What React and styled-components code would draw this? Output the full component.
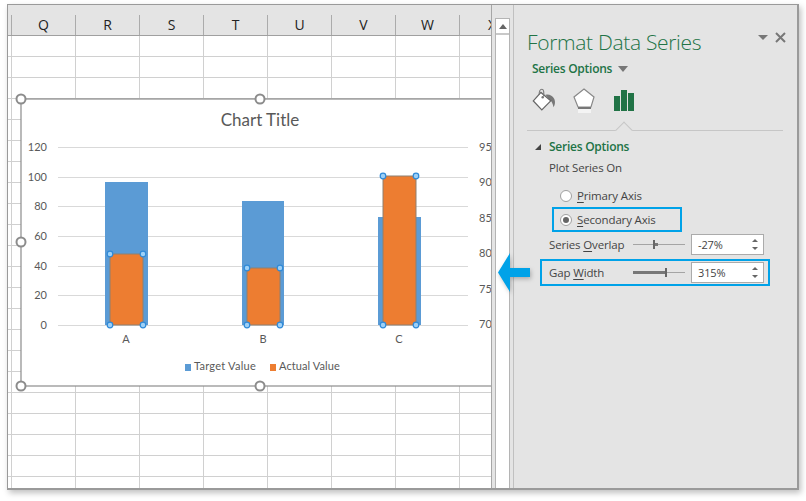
import React from 'react';
import styled, { createGlobalStyle } from 'styled-components';

const GlobalStyle = createGlobalStyle`
  html, body { margin: 0; padding: 0; background: #fff; }
  #root { width: 806px; height: 501px; overflow: hidden; }
`;

const Page = styled.div`
  width: 806px;
  height: 501px;
  padding: 4px 0 0 7px;
  box-sizing: border-box;
`;

const Window = styled.div`
  width: 792px;
  height: 486px;
  display: flex;
  box-sizing: border-box;
  background: #e4e4e4;
  border: 1px solid #9a9a9a;
  border-width: 1px 2px 2px 1px;
  box-shadow: 2px 3px 6px rgba(0, 0, 0, 0.25);
  position: relative;
`;

const Sheet = styled.div`
  width: 483px;
  flex: none;
  position: relative;
  overflow: hidden;
  box-sizing: content-box;
  border-right: 1px solid #a6a6a6;
`;

const HeaderRow = styled.div`
  height: 31px;
  display: flex;
  align-items: flex-end;
  box-sizing: border-box;
  border-bottom: 1px solid #a0a0a0;
`;

const HeaderCell = styled.div`
  width: ${({ $w }) => $w}px;
  flex: none;
  height: 20px;
  box-sizing: border-box;
  border-right: 1px solid #ababab;
  font: 14px 'Open Sans', sans-serif;
  color: #222;
  text-align: center;
  line-height: 20px;
  &:last-child { border-right: 0; }
`;

const Cells = styled.div`
  background: #fff;
  height: 453px;
  overflow: hidden;
`;

const Row = styled.div`
  display: flex;
  height: 21px;
  box-sizing: border-box;
  border-bottom: 1px solid #d0d0d0;
`;

const Cell = styled.div`
  width: ${({ $w }) => $w}px;
  flex: none;
  box-sizing: border-box;
  border-right: 1px solid #d0d0d0;
  &:last-child { border-right: 0; }
`;

const ChartLayer = styled.svg`
  position: absolute;
  left: 0;
  top: 85px;
  display: block;
`;

const Track = styled.div`
  width: 13px;
  flex: none;
  margin: 13px 0 0 3px;
  background: #fff;
  border: 1px solid #b4b4b4;
  border-width: 1px 1px 0 1px;
  box-sizing: content-box;
`;

const TrackButton = styled.div`
  height: 14px;
  border-bottom: 2px solid #c8c8c8;
  display: flex;
  align-items: center;
  justify-content: center;
  &::before {
    content: '';
    border: 4px solid transparent;
    border-top: 0;
    border-bottom: 5px solid #666;
  }
`;

const Pane = styled.aside`
  flex: 1;
  margin-left: 3px;
  border-left: 1px solid #c0c0c0;
  padding: 24px 11px 0 13px;
  font-family: 'Open Sans', sans-serif;
  color: #444;
  position: relative;
`;

const PaneTitleBar = styled.div`
  display: flex;
  justify-content: space-between;
  align-items: flex-start;
`;

const PaneTitle = styled.div`
  font: 300 21px/26px 'Open Sans', sans-serif;
  color: #217346;
  letter-spacing: -0.32px;
`;

const PaneActions = styled.div`
  display: flex;
  align-items: center;
  gap: 7px;
  margin: 3px 0 0 0;
`;

const Caret = styled.span`
  width: 0;
  height: 0;
  border: 5px solid transparent;
  border-top: ${({ $h }) => $h}px solid #777;
  border-bottom: 0;
`;

const Dropdown = styled.div`
  display: flex;
  align-items: center;
  gap: 6px;
  margin: 6px 0 0 5px;
  font-weight: 600;
  font-size: 12px;
  line-height: 16px;
  letter-spacing: -0.25px;
  color: #217346;
`;

const IconTabs = styled.div`
  display: flex;
  gap: 16px;
  margin: 10px 0 0 5px;
  height: 43px;
  align-items: flex-start;
`;

const Divider = styled.div`
  height: 1px;
  background: #c6c6c6;
  position: relative;
  margin-right: 3px;
  &::after {
    content: '';
    position: absolute;
    left: 91px;
    top: -6px;
    width: 11px;
    height: 11px;
    transform: rotate(45deg);
    background: #e4e4e4;
    border: 1px solid #c6c6c6;
    border-width: 1px 0 0 1px;
  }
`;

const SectionHead = styled.div`
  display: flex;
  align-items: center;
  margin: 8px 0 0 8px;
  gap: 8px;
  font-weight: 600;
  font-size: 12px;
  line-height: 16px;
  letter-spacing: -0.25px;
  color: #217346;
`;

const Corner = styled.span`
  width: 0;
  height: 0;
  border-style: solid;
  border-width: 0 0 6px 6px;
  border-color: transparent transparent #444 transparent;
`;

const Body = styled.div`
  padding-left: 22px;
  font-size: 11.5px;
  letter-spacing: -0.15px;
  line-height: 16px;
`;

const PlotLabel = styled.div`
  margin: 5px 0 8px;
`;

const RadioRow = styled.div`
  display: flex;
  align-items: center;
  gap: 5px;
  height: ${({ $boxed }) => ($boxed ? 25 : 23)}px;
  margin-left: 3px;
  padding-left: 6px;
  width: 130px;
  box-sizing: border-box;
  border: 2px solid ${({ $boxed }) => ($boxed ? '#00a2e8' : 'transparent')};
`;

const RadioDot = styled.span`
  width: 12px;
  height: 12px;
  border-radius: 50%;
  border: 1px solid #a0a0a0;
  background: #fff;
  box-sizing: border-box;
  display: flex;
  align-items: center;
  justify-content: center;
  &::after {
    content: '';
    width: 6px;
    height: 6px;
    border-radius: 50%;
    background: ${({ $on }) => ($on ? '#666' : 'transparent')};
  }
`;

const U = styled.span`
  text-decoration: underline;
  text-underline-offset: 2px;
`;

const SliderRow = styled.div`
  display: flex;
  align-items: center;
  box-sizing: border-box;
  height: ${({ $boxed }) => ($boxed ? 27 : 25)}px;
  width: ${({ $boxed }) => ($boxed ? 230 : 214)}px;
  margin: ${({ $boxed }) => ($boxed ? '2px 0 0 -9px' : '0')};
  padding-left: ${({ $boxed }) => ($boxed ? 7 : 0)}px;
  border: ${({ $boxed }) => ($boxed ? '2px solid #00a2e8' : '0')};
`;

const SliderLabel = styled.div`
  width: 84px;
  flex: none;
`;

const Slider = styled.div`
  width: 52px;
  height: 1px;
  flex: none;
  background: #a4a4a4;
  position: relative;
  &::before {
    content: '';
    position: absolute;
    left: ${({ $from }) => $from}px;
    top: -1px;
    height: 3px;
    width: ${({ $to, $from }) => $to - $from}px;
    background: #777;
  }
  &::after {
    content: '';
    position: absolute;
    left: ${({ $at }) => $at}px;
    top: -4px;
    width: 2px;
    height: 9px;
    background: #666;
  }
`;

const Spin = styled.div`
  width: 73px;
  height: 21px;
  margin-left: 6px;
  flex: none;
  box-sizing: border-box;
  background: #fff;
  border: 1px solid #ababab;
  display: flex;
  align-items: center;
  justify-content: space-between;
  padding: 0 5px 0 6px;
  font-size: 11px;
  color: #444;
`;

const Arrows = styled.div`
  display: flex;
  flex-direction: column;
  gap: 5px;
  &::before, &::after {
    content: '';
    width: 0;
    border: 3px solid transparent;
  }
  &::before { border-top: 0; border-bottom: 3px solid #666; }
  &::after { border-bottom: 0; border-top: 3px solid #666; }
`;

const BlueArrow = styled.svg`
  position: absolute;
  left: 490px;
  top: 243px;
  display: block;
  filter: drop-shadow(1px 2px 2px rgba(0, 0, 0, 0.25));
`;

const COLS = [4, 64, 64, 64, 64, 64, 64, 64, 64];
const LABELS = ['', 'Q', 'R', 'S', 'T', 'U', 'V', 'W', 'X'];

const PaintIcon = () => (
  <svg width="25" height="26" viewBox="0 0 28 26">
    <path d="M15 7 Q22 6 25 12 Q27 17 24 21 Q23 15 20 13 Z" fill="#777" />
    <path d="M1.5 14 L10 4.5 L21 14 L11 24 Z" fill="#fff" stroke="#666" strokeWidth="1.4" />
    <path d="M8 7 Q8 1 11 1 Q14 1 13 9" fill="none" stroke="#777" strokeWidth="1.2" />
    <circle cx="12" cy="10" r="1.4" fill="#777" />
  </svg>
);

const ShapeIcon = () => (
  <svg width="24" height="26" viewBox="0 0 24 26">
    <path d="M11 2 L21 10 L18 20 L5 20 L1 10 Z" fill="#fff" stroke="#888" strokeWidth="1.2" />
    <rect x="5" y="20" width="13" height="2" fill="#777" />
    <rect x="5" y="22" width="13" height="4" fill="#f4f4f4" />
  </svg>
);

const BarsIcon = () => (
  <svg width="22" height="26" viewBox="0 0 22 26">
    <rect x="1" y="9" width="6" height="15" fill="#217346" />
    <rect x="8" y="3" width="6" height="21" fill="#217346" />
    <rect x="15" y="6" width="6" height="18" fill="#217346" />
  </svg>
);

const Handle = ({ x, y }) => (
  <circle cx={x} cy={y} r="4.5" fill="#fff" stroke="#8c8c8c" strokeWidth="2" />
);

const Dot = ({ x, y }) => (
  <circle cx={x} cy={y} r="2.8" fill="#9dd0f7" stroke="#2f8ad8" strokeWidth="1.2" />
);

const Label = styled.text`
  font-family: Lato, sans-serif;
  font-size: ${({ $s }) => $s || 11}px;
  letter-spacing: ${({ $ls }) => $ls || 0}px;
  fill: #595959;
`;

const BARS = [
  { name: 'A', cx: 126, bx: 105, bw: 43, bt: 182, ox: 110, ow: 33, ot: 254 },
  { name: 'B', cx: 263, bx: 242, bw: 42, bt: 201, ox: 247, ow: 33, ot: 268 },
  { name: 'C', cx: 399, bx: 378, bw: 43, bt: 217, ox: 383, ow: 33, ot: 176 },
];

const Chart = () => (
  <ChartLayer width="483" height="310" viewBox="8 90 483 310">
    <rect x="21" y="99" width="480" height="287" fill="#fff" stroke="#8c8c8c" strokeWidth="1.2" />
    <Label x="260" y="126" textAnchor="middle" $s={17}>Chart Title</Label>
    {[147, 177, 206, 236, 266, 295, 325].map((y, i) => (
      <g key={y}>
        <line x1="58" x2="468" y1={y + 0.5} y2={y + 0.5} stroke="#d9d9d9" />
        <Label x="47" y={y + 4} textAnchor="end">{120 - i * 20}</Label>
      </g>
    ))}
    {[[95, 147], [90, 182], [85, 218], [80, 253], [75, 289], [70, 324]].map(([v, y]) => (
      <Label key={v} x="479" y={y + 4}>{v}</Label>
    ))}
    {BARS.map((b) => (
      <g key={b.name}>
        <rect x={b.bx} y={b.bt} width={b.bw} height={325 - b.bt} fill="#5b9bd5" />
        <rect x={b.ox} y={b.ot} width={b.ow} height={325 - b.ot} rx="2" fill="#ed7d31" stroke="#8d8072" strokeWidth="1" />
        <Dot x={b.ox} y={b.ot} />
        <Dot x={b.ox + b.ow} y={b.ot} />
        <Dot x={b.ox} y={325} />
        <Dot x={b.ox + b.ow} y={325} />
        <Label x={b.cx} y={343} textAnchor="middle">{b.name}</Label>
      </g>
    ))}
    <rect x="185" y="364" width="6" height="7" fill="#5b9bd5" />
    <Label x="194" y="370" $ls={0.25}>Target Value</Label>
    <rect x="270" y="364" width="6" height="7" fill="#ed7d31" />
    <Label x="279" y="370" $ls={0.1}>Actual Value</Label>
    <Handle x={21} y={99} />
    <Handle x={260} y={99} />
    <Handle x={21} y={242} />
    <Handle x={21} y={386} />
    <Handle x={260} y={386} />
  </ChartLayer>
);

export default function App() {
  return (
    <Page>
      <GlobalStyle />
      <Window>
        <Sheet>
          <HeaderRow>
            {COLS.map((w, i) => (
              <HeaderCell key={i} $w={w}>{LABELS[i]}</HeaderCell>
            ))}
          </HeaderRow>
          <Cells>
            {Array.from({ length: 22 }).map((_, r) => (
              <Row key={r}>
                {COLS.map((w, c) => (
                  <Cell key={c} $w={w} />
                ))}
              </Row>
            ))}
          </Cells>
          <Chart />
        </Sheet>
        <Track>
          <TrackButton />
        </Track>
        <Pane>
          <PaneTitleBar>
            <PaneTitle>Format Data Series</PaneTitle>
            <PaneActions>
              <Caret $h={5} />
              <svg width="11" height="11" viewBox="0 0 11 11">
                <path d="M1 1 L10 10 M10 1 L1 10" stroke="#777" strokeWidth="2" />
              </svg>
            </PaneActions>
          </PaneTitleBar>
          <Dropdown>Series Options <Caret $h={6} /></Dropdown>
          <IconTabs>
            <PaintIcon />
            <ShapeIcon />
            <BarsIcon />
          </IconTabs>
          <Divider />
          <SectionHead><Corner />Series Options</SectionHead>
          <Body>
            <PlotLabel>Plot Series On</PlotLabel>
            <RadioRow>
              <RadioDot />
              <span><U>P</U>rimary Axis</span>
            </RadioRow>
            <RadioRow $boxed>
              <RadioDot $on />
              <span><U>S</U>econdary Axis</span>
            </RadioRow>
            <SliderRow>
              <SliderLabel>Series <U>O</U>verlap</SliderLabel>
              <Slider $at={20} $from={20} $to={25} />
              <Spin>-27%<Arrows /></Spin>
            </SliderRow>
            <SliderRow $boxed>
              <SliderLabel>Gap <U>W</U>idth</SliderLabel>
              <Slider $at={32} $from={0} $to={32} />
              <Spin>315%<Arrows /></Spin>
            </SliderRow>
          </Body>
        </Pane>
        <BlueArrow width="44" height="50" viewBox="0 0 44 50">
          <path d="M0 24.5 L12 5 L12 20 L32 20 L32 29 L12 29 L12 44 Z" fill="#00a2e8" />
        </BlueArrow>
      </Window>
    </Page>
  );
}
